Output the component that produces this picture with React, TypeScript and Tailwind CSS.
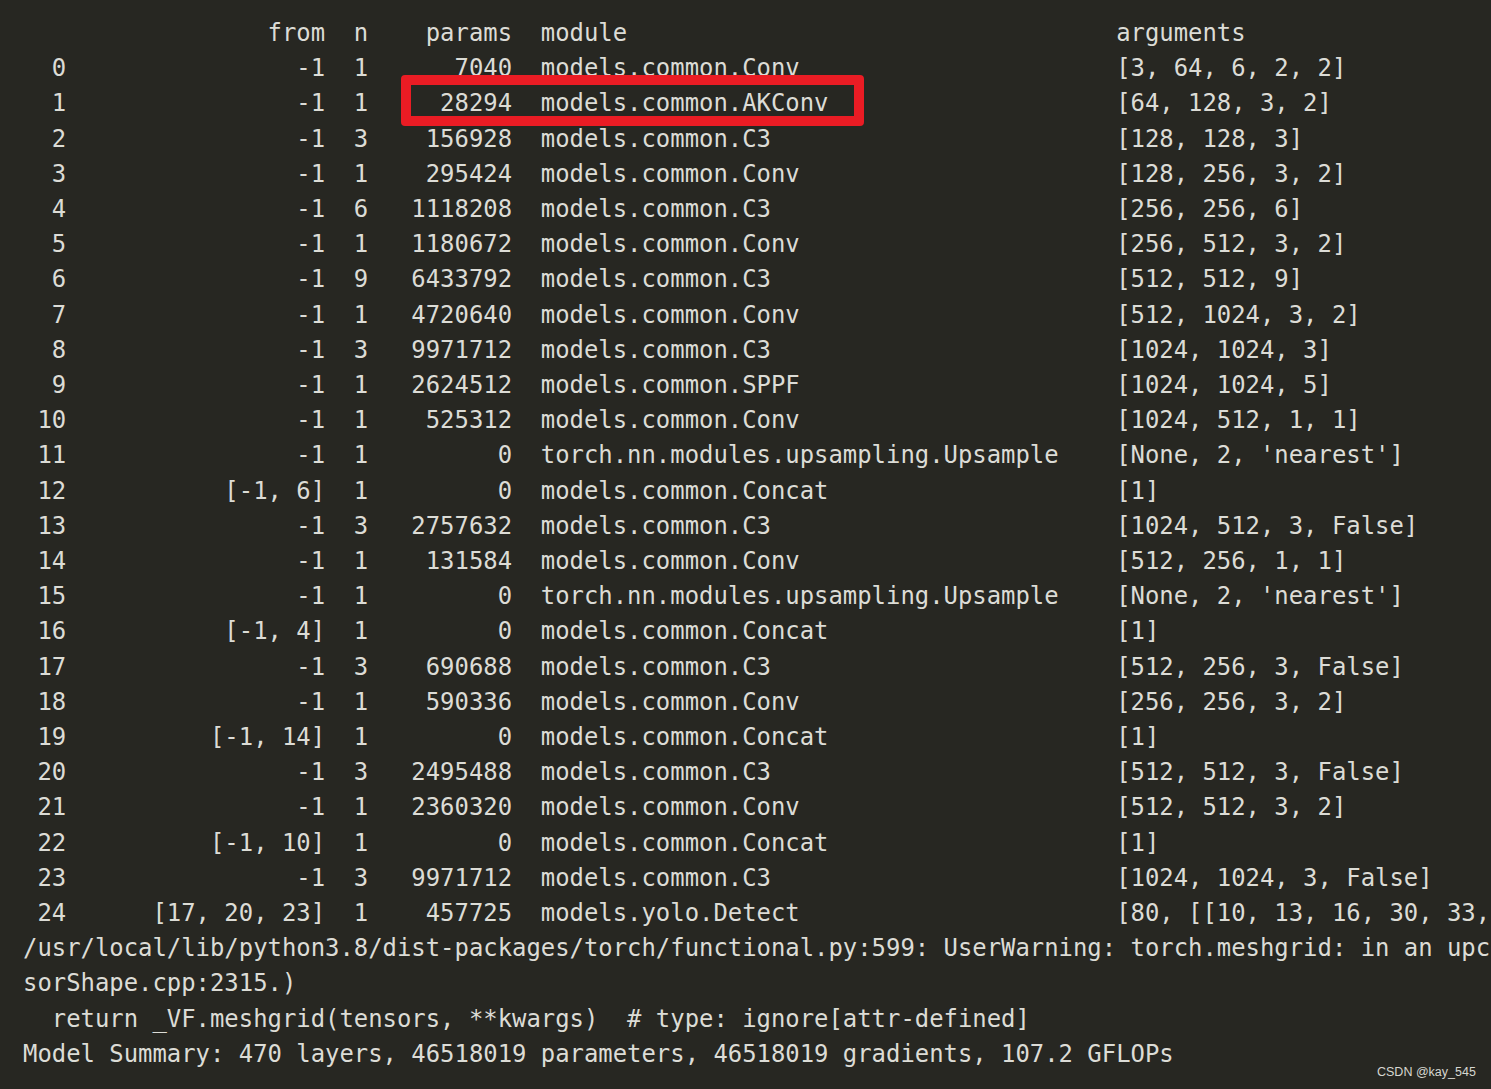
import React from "react";

type Row = [number, string, number, number, string, string];

const rows: Row[] = [
  [0, "-1", 1, 7040, "models.common.Conv", "[3, 64, 6, 2, 2]"],
  [1, "-1", 1, 28294, "models.common.AKConv", "[64, 128, 3, 2]"],
  [2, "-1", 3, 156928, "models.common.C3", "[128, 128, 3]"],
  [3, "-1", 1, 295424, "models.common.Conv", "[128, 256, 3, 2]"],
  [4, "-1", 6, 1118208, "models.common.C3", "[256, 256, 6]"],
  [5, "-1", 1, 1180672, "models.common.Conv", "[256, 512, 3, 2]"],
  [6, "-1", 9, 6433792, "models.common.C3", "[512, 512, 9]"],
  [7, "-1", 1, 4720640, "models.common.Conv", "[512, 1024, 3, 2]"],
  [8, "-1", 3, 9971712, "models.common.C3", "[1024, 1024, 3]"],
  [9, "-1", 1, 2624512, "models.common.SPPF", "[1024, 1024, 5]"],
  [10, "-1", 1, 525312, "models.common.Conv", "[1024, 512, 1, 1]"],
  [11, "-1", 1, 0, "torch.nn.modules.upsampling.Upsample", "[None, 2, 'nearest']"],
  [12, "[-1, 6]", 1, 0, "models.common.Concat", "[1]"],
  [13, "-1", 3, 2757632, "models.common.C3", "[1024, 512, 3, False]"],
  [14, "-1", 1, 131584, "models.common.Conv", "[512, 256, 1, 1]"],
  [15, "-1", 1, 0, "torch.nn.modules.upsampling.Upsample", "[None, 2, 'nearest']"],
  [16, "[-1, 4]", 1, 0, "models.common.Concat", "[1]"],
  [17, "-1", 3, 690688, "models.common.C3", "[512, 256, 3, False]"],
  [18, "-1", 1, 590336, "models.common.Conv", "[256, 256, 3, 2]"],
  [19, "[-1, 14]", 1, 0, "models.common.Concat", "[1]"],
  [20, "-1", 3, 2495488, "models.common.C3", "[512, 512, 3, False]"],
  [21, "-1", 1, 2360320, "models.common.Conv", "[512, 512, 3, 2]"],
  [22, "[-1, 10]", 1, 0, "models.common.Concat", "[1]"],
  [23, "-1", 3, 9971712, "models.common.C3", "[1024, 1024, 3, False]"],
  [
    24,
    "[17, 20, 23]",
    1,
    457725,
    "models.yolo.Detect",
    "[80, [[10, 13, 16, 30, 33, 23], [30, 61, 62, 45, 59, 119], [116, 90, 156, 198, 373, 326]], [128, 256, 512]]",
  ],
];

const header =
  "".padStart(3) +
  "from".padStart(18) +
  "n".padStart(3) +
  "params".padStart(10) +
  "  " +
  "module".padEnd(40) +
  "arguments";

const fmt = (r: Row) =>
  String(r[0]).padStart(3) +
  r[1].padStart(18) +
  String(r[2]).padStart(3) +
  String(r[3]).padStart(10) +
  "  " +
  r[4].padEnd(40) +
  r[5];

const tail = [
  "/usr/local/lib/python3.8/dist-packages/torch/functional.py:599: UserWarning: torch.meshgrid: in an upcoming release, it will be required to pass the indexing argument. (Triggered internally at ../aten/src/ATen/native/Ten",
  "sorShape.cpp:2315.)",
  "  return _VF.meshgrid(tensors, **kwargs)  # type: ignore[attr-defined]",
  "Model Summary: 470 layers, 46518019 parameters, 46518019 gradients, 107.2 GFLOPs",
];

export default function App() {
  const lines = [header, ...rows.map(fmt), ...tail];
  return (
    <div className="relative h-[1089px] w-[1491px] overflow-hidden bg-[#272722]">
      <div
        className="flex flex-col pl-[23px] pt-[16px] text-[23.9px] leading-[35.2px] text-[#dcdcd6]"
        style={{ fontFamily: '"DejaVu Sans Mono", "Liberation Mono", monospace' }}
      >
        {lines.map((l, i) => (
          <div key={i} className="whitespace-pre">
            {l}
          </div>
        ))}
      </div>
      <div className="absolute left-[401px] top-[75px] h-[51px] w-[463px] rounded-[4px] border-[10px] border-[#ea1c24]" />
      <div
        className="absolute left-[1377px] top-[1063px] text-[12.5px] text-[#d6d6d0]"
        style={{ fontFamily: '"Liberation Sans", Arial, sans-serif' }}
      >
        CSDN @kay_545
      </div>
    </div>
  );
}
